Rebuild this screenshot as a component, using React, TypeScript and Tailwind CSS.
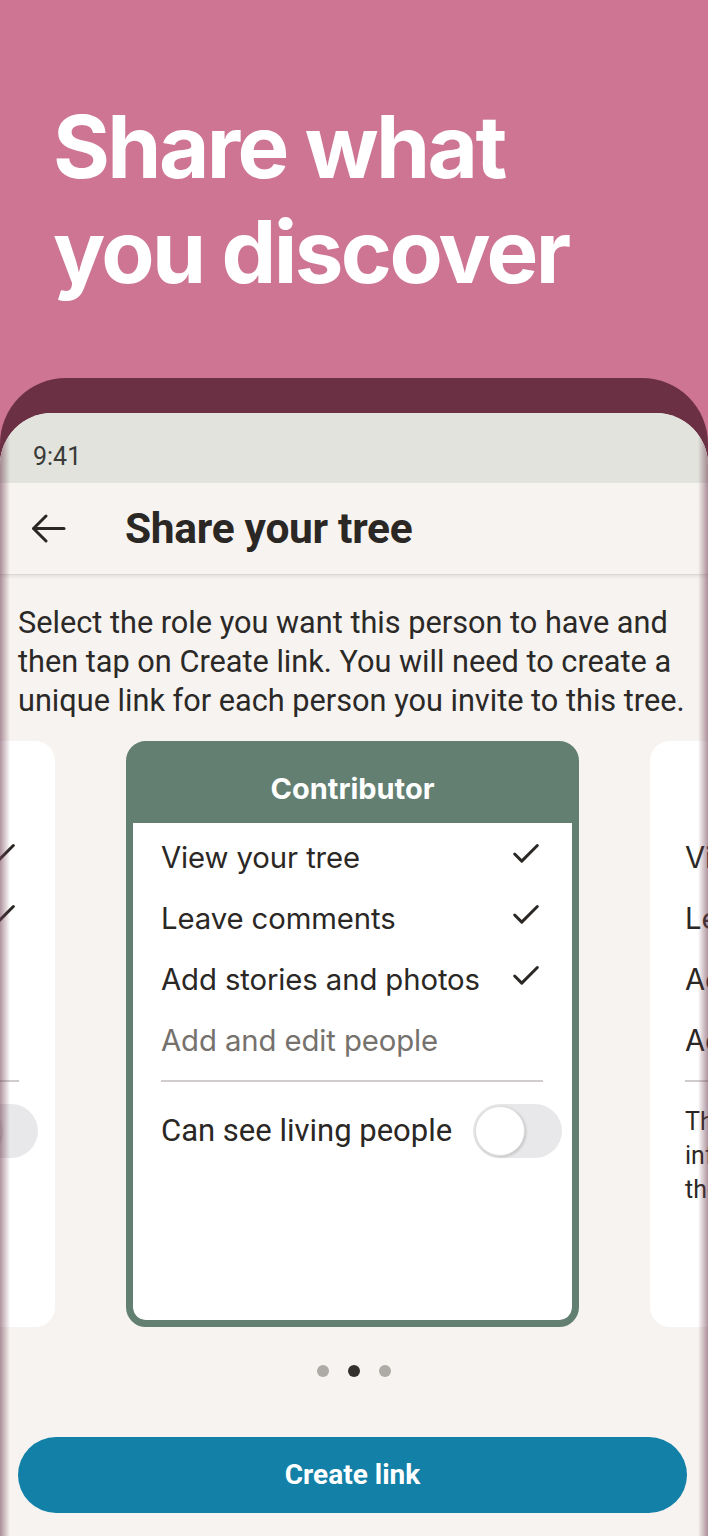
import React from "react";

const inter = "font-['Inter',sans-serif]";
const roboto = "font-['Roboto',sans-serif]";

function Check() {
  return (
    <svg width="34" height="34" viewBox="0 0 24 24" fill="none" stroke="#2a2724" strokeWidth="2.1" strokeLinecap="round" strokeLinejoin="round">
      <path d="M20 6 9 17l-5-5" />
    </svg>
  );
}

function Toggle() {
  return (
    <div className="relative w-[89px] h-[54px] rounded-full bg-[#e8e8ea] shrink-0">
      <div className="absolute left-[2px] top-[2px] w-[50px] h-[50px] rounded-full bg-white border border-[#dedede] shadow-[1px_1px_3px_rgba(0,0,0,0.18)]" />
    </div>
  );
}

type Row = { label: string; on: boolean };

function RoleCard({ title, rows, selected, footer }: { title: string; rows: Row[]; selected?: boolean; footer: "toggle" | "text" }) {
  return (
    <div
      className={
        "w-[453px] h-[586px] shrink-0 rounded-[20px] border-[7px] flex flex-col overflow-hidden " +
        (selected ? "border-[#627f72] bg-[#627f72]" : "border-white bg-white")
      }
    >
      <div className={"h-[75px] shrink-0 flex items-center justify-center pt-[6px] text-[29px] font-bold " + inter + (selected ? " text-white" : " text-[#2a2724]")}>
        {title}
      </div>
      <div className={"flex-1 bg-white flex flex-col pt-[4px] " + (selected ? "rounded-b-[12px]" : "")}>
        {rows.map((r) => (
          <div key={r.label} className="h-[61px] pl-[28px] pr-[29px] flex items-center justify-between">
            <span className={inter + " text-[29.3px] tracking-[-0.1px] " + (r.on ? "text-[#2a2724]" : "text-[#75716d]")}>{r.label}</span>
            {r.on ? <span className="-mt-[8px]"><Check /></span> : null}
          </div>
        ))}
        <div className="ml-[28px] mr-[29px] mt-[9px] h-[2px] bg-[#cfcccb]" />
        {footer === "toggle" ? (
          <div className="mt-[22px] pl-[28px] pr-[10px] flex items-center justify-between h-[54px]">
            <span className={roboto + " text-[31px] text-[#2a2724]"}>Can see living people</span>
            <Toggle />
          </div>
        ) : (
          <div className={"mt-[23px] pl-[28px] pr-[28px] text-[25px] leading-[34px] text-[#2a2724] " + roboto}>
            <div>This role can see living</div>
            <div>information and people in</div>
            <div>the tree you share.</div>
          </div>
        )}
      </div>
    </div>
  );
}

export default function App() {
  const guest: Row[] = [
    { label: "View your tree", on: true },
    { label: "Leave comments", on: true },
    { label: "Add stories and photos", on: false },
    { label: "Add and edit people", on: false },
  ];
  const contributor: Row[] = [
    { label: "View your tree", on: true },
    { label: "Leave comments", on: true },
    { label: "Add stories and photos", on: true },
    { label: "Add and edit people", on: false },
  ];
  const editor: Row[] = [
    { label: "View your tree", on: true },
    { label: "Leave comments", on: true },
    { label: "Add stories and photos", on: true },
    { label: "Add and edit people", on: true },
  ];

  return (
    <div className="w-[708px] h-[1536px] bg-[#cd7592] overflow-hidden flex flex-col">
      <div className="h-[378px] shrink-0 pt-[94px] pl-[53px]">
        <h1 className={inter + " text-white font-bold text-[87px] leading-[105px] tracking-[-0.03em]"}>
          Share what
          <br />
          you discover
        </h1>
      </div>

      <div className="flex-1 bg-[#6c3045] rounded-t-[66px] pt-[35px] flex flex-col">
        <div className="relative flex-1 rounded-t-[52px] overflow-hidden bg-[#f6f3f0] flex flex-col">
          <div className="h-[70px] shrink-0 bg-[#e1e3dc] flex items-center pl-[33px] pt-[18px]">
            <span className={roboto + " text-[25px] text-[#3a3a38]"}>9:41</span>
          </div>

          <div className="h-[92px] shrink-0 flex items-center border-b border-[#dcd8d4] shadow-[0_2px_3px_rgba(0,0,0,0.07)]">
            <div className="w-[125px] shrink-0 pl-[31px] flex items-center">
              <svg width="35" height="29" viewBox="0 0 35 29" fill="none" stroke="#2a2724" strokeWidth="3" strokeLinecap="round" strokeLinejoin="round">
                <path d="M33 14.5H3" />
                <path d="M15 2 2.5 14.5 15 27" />
              </svg>
            </div>
            <span className={roboto + " text-[42.5px] font-bold text-[#2a2724] tracking-[-0.3px]"}>Share your tree</span>
          </div>

          <p className={roboto + " pl-[18px] pr-[6px] pt-[28px] text-[30.7px] leading-[39px] text-[#2b2927]"}>
            Select the role you want this person to have and then tap on Create link. You will need to create a unique link for each person you invite to this tree.
          </p>

          <div className="mt-[21px] pr-[3px] flex justify-center gap-[71px]">
            <RoleCard title="Guest" rows={guest} footer="toggle" />
            <RoleCard title="Contributor" rows={contributor} selected footer="toggle" />
            <RoleCard title="Editor" rows={editor} footer="text" />
          </div>

          <div className="mt-[38px] flex justify-center gap-[19px]">
            <div className="w-[12px] h-[12px] rounded-full bg-[#aeaaa6]" />
            <div className="w-[12px] h-[12px] rounded-full bg-[#33302d]" />
            <div className="w-[12px] h-[12px] rounded-full bg-[#aeaaa6]" />
          </div>

          <div className="mt-[60px] pl-[18px] pr-[21px]">
            <div className="h-[76px] rounded-full bg-[#1380a8] flex items-center justify-center">
              <span className={roboto + " text-white font-bold text-[28px]"}>Create link</span>
            </div>
          </div>

          <div className="pointer-events-none absolute left-0 top-0 bottom-0 w-[10px] bg-gradient-to-r from-[rgba(110,60,80,0.55)] to-transparent" />
          <div className="pointer-events-none absolute right-0 top-0 bottom-0 w-[10px] bg-gradient-to-l from-[rgba(110,60,80,0.55)] to-transparent" />
        </div>
      </div>
    </div>
  );
}
